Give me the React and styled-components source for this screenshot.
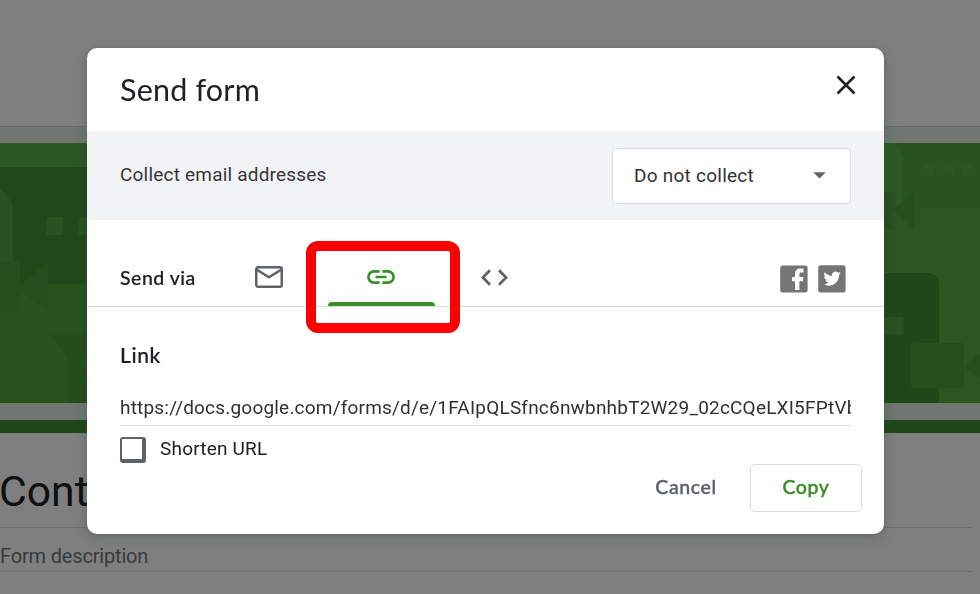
import React from 'react'
import styled, { createGlobalStyle } from 'styled-components'

const GlobalStyle = createGlobalStyle`
  * {
    box-sizing: border-box;
  }
  body {
    margin: 0;
    overflow: hidden;
    background: #fff;
    color: #202124;
    font-family: Roboto, "Liberation Sans", sans-serif;
  }
`

function Banner() {
  return (
    <BannerArt viewBox="0 0 980 260" preserveAspectRatio="none">
      <rect width="980" height="260" fill="#50a63e" />
      {/* left side */}
      <rect width="490" height="24" fill="#58b044" />
      <rect y="24" width="490" height="117" fill="#419332" />
      <path d="M0 45L12.7 60V119H0z" fill="#50a43e" />
      <rect x="46" y="74" width="17.500" height="18" rx="3" fill="#50a43e" />
      <rect x="78" y="74" width="17.500" height="18" rx="3" fill="#50a43e" />
      <rect x="-6" y="119" width="26" height="50" rx="3" fill="#4a9c39" />
      <path d="M20 141L48 119.500V169L20 148z" fill="#4a9c39" />
      <path d="M48 190L67 213V260H120V190z" fill="#499b39" />
      <rect x="81" y="214" width="9" height="9" rx="2" fill="#4ea23c" />
      <rect x="81" y="232" width="9" height="10" rx="2" fill="#4ea23c" />
      {/* right side */}
      <rect x="600" width="380" height="260" fill="#56ac43" />
      <rect x="600" width="380" height="65" fill="#50a63e" />
      <path d="M800 0H893L903 14V65H800z" fill="#58b044" />
      <rect x="924" y="22" width="11" height="10" rx="1" fill="#56ac43" />
      <rect x="943" y="22" width="11" height="10" rx="1" fill="#56ac43" />
      <rect x="961" y="22" width="11" height="10" rx="1" fill="#56ac43" />
      <rect x="860" y="49.500" width="32.500" height="37.500" rx="2" fill="#4b9f3a" />
      <path d="M892 67L914.500 49V87z" fill="#4b9f3a" />
      <path d="M800 130H928Q939 131 939 142V260H800z" fill="#3e9030" />
      <rect x="850" y="174" width="53.500" height="17.500" fill="#50a43e" />
      <rect x="911" y="200" width="53" height="45.500" rx="2" fill="#4a9c39" />
      <path d="M964 224L980 210V236z" fill="#4a9c39" />
    </BannerArt>
  )
}

function App() {
  return (
    <>
      <GlobalStyle />
      <Page>
        <TopBar />
        <Banner />
        <FormStrip />
        <FormCard>
          <FormTitle>Contact information</FormTitle>
          <FormDescription>Form description</FormDescription>
        </FormCard>
      </Page>
      <Scrim>
        <Dialog>
          <DialogHeader>
            <Title>Send form</Title>
            <svg width="20" height="20" viewBox="0 0 20 20">
              <path d="M1.500 1.500L18.500 18.500M18.500 1.500L1.500 18.500" stroke="#202124" strokeWidth="2.600" />
            </svg>
          </DialogHeader>

          <CollectRow>
            <Label>Collect email addresses</Label>
            <Select>
              Do not collect
              <svg width="13" height="7" viewBox="0 0 13 7">
                <path d="M.3 .3H12.700L6.500 6.500z" fill="#5f6368" />
              </svg>
            </Select>
          </CollectRow>

          <TabRow>
            <SendVia>Send via</SendVia>
            <Tab $width={107}>
              <svg width="28" height="22" viewBox="0 0 28 22">
                <rect x="1.250" y="1.250" width="25.500" height="19.500" rx="1.800" fill="none" stroke="#5f6368" strokeWidth="2.500" />
                <path d="M1.500 3.500L14 11.300L26.500 3.500" fill="none" stroke="#5f6368" strokeWidth="2.600" />
              </svg>
            </Tab>
            <Tab $width={117} $active>
              <svg width="28" height="14" viewBox="0 0 28 14">
                <path d="M12.600 1.400H7A5.600 5.600 0 0 0 7 12.600H12.600M15.400 1.400H21A5.600 5.600 0 0 1 21 12.600H15.400M8.500 7H19.500" fill="none" stroke="#388e27" strokeWidth="2.600" />
              </svg>
              <ActiveBar />
              <Highlight />
            </Tab>
            <Tab $width={111}>
              <svg width="27" height="17" viewBox="0 0 27 17">
                <path d="M9 1.200L1.900 8.500L9 15.800M18 1.200L25.100 8.500L18 15.800" fill="none" stroke="#5f6368" strokeWidth="2.700" />
              </svg>
            </Tab>
            <Social>
              <svg width="28" height="28" viewBox="0 0 28 28">
                <rect x=".2" y=".6" width="27.400" height="27" rx="2.500" fill="#757575" />
                <path d="M15 25V16.200H12V12H15V9.300C15 5.500 17 3.500 20.300 3.500H23.500V7.600H21.200C19.900 7.600 19.400 8.200 19.400 9.500V12H23.400L22.900 16.200H19.400V25z" fill="#fff" />
              </svg>
              <svg width="28" height="28" viewBox="0 0 28 28">
                <rect x=".2" y=".2" width="27.400" height="27.400" rx="2.500" fill="#757575" />
                <g transform="translate(5.500 5) scale(.72)">
                  <path d="M23.950 4.570a10 10 0 0 1-2.820.77 4.960 4.960 0 0 0 2.160-2.720c-.95.550-2 .95-3.130 1.180a4.920 4.920 0 0 0-8.380 4.480C7.690 8.100 4.070 6.130 1.640 3.160a4.820 4.820 0 0 0-.67 2.480c0 1.710.87 3.210 2.190 4.100a4.900 4.900 0 0 1-2.230-.62v.06a4.920 4.920 0 0 0 3.950 4.830 5 5 0 0 1-2.210.08 4.940 4.940 0 0 0 4.600 3.420A9.870 9.870 0 0 1 0 19.540a13.990 13.990 0 0 0 7.550 2.210c9.050 0 14-7.500 14-13.980 0-.21 0-.42-.02-.63a9.940 9.940 0 0 0 2.420-2.570z" fill="#fff" />
                </g>
              </svg>
            </Social>
          </TabRow>

          <LinkPanel>
            <PanelTitle>Link</PanelTitle>
            <Url>https://docs.google.com/forms/d/e/1FAIpQLSfnc6nwbnhbT2W29_02cCQeLXI5FPtVb</Url>
            <ShortenRow>
              <Checkbox />
              <ShortenLabel>Shorten URL</ShortenLabel>
            </ShortenRow>
          </LinkPanel>

          <Actions>
            <Button $width={128}>Cancel</Button>
            <Button $width={112} $primary>Copy</Button>
          </Actions>
        </Dialog>
      </Scrim>
    </>
  )
}

export default App

const Page = styled.div`
  height: 594px;
  display: flex;
  flex-direction: column;
  background: #e0eee2;
`

const TopBar = styled.header`
  height: 127px;
  margin-bottom: 16px;
  background: #fff;
  border-bottom: 1px solid #d5dad8;
`

const BannerArt = styled.svg`
  display: block;
  width: 980px;
  height: 260px;
`

const FormStrip = styled.div`
  height: 13px;
  margin-top: 17px;
  background: #3e8e2e;
`

const FormCard = styled.section`
  flex: 1;
  padding: 33px 8px 0 0;
  background: #fff;
`

const FormTitle = styled.h1`
  height: 62px;
  margin: 0;
  font-size: 42.670px;
  font-weight: 400;
  line-height: 50px;
  text-indent: -1px;
  border-bottom: 1px solid #dadce0;
`

const FormDescription = styled.p`
  height: 44px;
  margin: 0;
  padding-top: 16px;
  font-size: 20px;
  line-height: 24px;
  letter-spacing: -0.17px;
  color: #70757a;
  border-bottom: 1px solid #dadce0;
`

const Scrim = styled.div`
  position: fixed;
  inset: 0;
  padding: 48px 96px 60px 87px;
  background: rgba(0, 0, 0, 0.5);
`

const Dialog = styled.div`
  height: 486px;
  display: flex;
  flex-direction: column;
  background: #fff;
  border-radius: 10px;
  box-shadow: 0 1px 4px rgba(60, 64, 67, 0.3), 0 5px 12px 4px rgba(60, 64, 67, 0.15);
`

const DialogHeader = styled.div`
  height: 83px;
  display: flex;
  justify-content: space-between;
  padding: 27px 28px 0 33px;
`

const Title = styled.h2`
  margin: -4px 0 0;
  font-family: Lato, sans-serif;
  font-size: 30.500px;
  font-weight: 400;
  line-height: 36px;
  letter-spacing: 0.2px;
`

const CollectRow = styled.div`
  height: 89px;
  display: flex;
  align-items: center;
  justify-content: space-between;
  padding: 0 33px;
  background: #f1f3f4;
`

const Label = styled.span`
  margin-top: -2px;
  font-size: 19px;
  letter-spacing: 0.2px;
  color: #35363a;
`

const Select = styled.div`
  width: 239px;
  height: 56px;
  display: flex;
  align-items: center;
  justify-content: space-between;
  padding: 0 24px 0 21px;
  background: #fff;
  border: 1px solid #dadce0;
  border-radius: 4px;
  font-size: 19px;
  letter-spacing: 0.25px;
  color: #303134;
`

const TabRow = styled.div`
  height: 87px;
  display: flex;
  align-items: stretch;
  padding: 27px 38px 0 33px;
  border-bottom: 1px solid #dadce0;
`

const SendVia = styled.span`
  width: 95px;
  padding-top: 19px;
  font-family: Lato, sans-serif;
  font-size: 19.500px;
  font-weight: 500;
  line-height: 24px;
  letter-spacing: 0.5px;
  -webkit-text-stroke: 0.2px;
`

const Tab = styled.div`
  position: relative;
  width: ${props => props.$width}px;
  display: flex;
  align-items: center;
  justify-content: center;
  padding-top: 1px;
`

const ActiveBar = styled.span`
  position: absolute;
  bottom: 0;
  left: 6px;
  width: 107px;
  height: 4px;
  background: #388e27;
  border-radius: 4px 4px 0 0;
`

// red frame drawn over the active tab
const Highlight = styled.span`
  position: absolute;
  top: -6px;
  left: -16px;
  width: 154px;
  height: 92px;
  border: 10px solid #ff0000;
  border-radius: 12px;
`

const Social = styled.div`
  display: flex;
  gap: 10px;
  margin-left: auto;
  padding-top: 18px;
`

const LinkPanel = styled.div`
  height: 157px;
  padding: 36px 33px 0;
`

const PanelTitle = styled.h3`
  margin: 0;
  font-family: Lato, sans-serif;
  font-size: 21px;
  font-weight: 500;
  line-height: 24px;
  letter-spacing: 0.6px;
  -webkit-text-stroke: 0.2px;
`

const Url = styled.div`
  height: 37px;
  margin-top: 22px;
  overflow: hidden;
  font-size: 19px;
  line-height: 37px;
  letter-spacing: 0.2px;
  color: #303134;
  white-space: nowrap;
  border-bottom: 1px solid #dadce0;
`

const ShortenRow = styled.div`
  display: flex;
  align-items: center;
  gap: 14px;
  margin-top: 11px;
`

const ShortenLabel = styled.span`
  margin-top: -2px;
  font-size: 19px;
  line-height: 22px;
  letter-spacing: 0.2px;
`

const Checkbox = styled.span`
  width: 26px;
  height: 26px;
  border: solid #5f6368;
  border-width: 2px 4px 4px 2px;
  border-radius: 3px;
`

const Actions = styled.div`
  display: flex;
  justify-content: flex-end;
  padding-right: 22px;
`

const Button = styled.button`
  width: ${props => props.$width}px;
  height: 48px;
  padding: 0 0 3px;
  background: #fff;
  border: 1px solid ${props => (props.$primary ? '#dadce0' : 'transparent')};
  border-radius: 5px;
  color: ${props => (props.$primary ? '#388e27' : '#5f6368')};
  font-family: Lato, sans-serif;
  font-size: 19.500px;
  font-weight: 500;
  letter-spacing: 0.6px;
  -webkit-text-stroke: 0.4px;
`
